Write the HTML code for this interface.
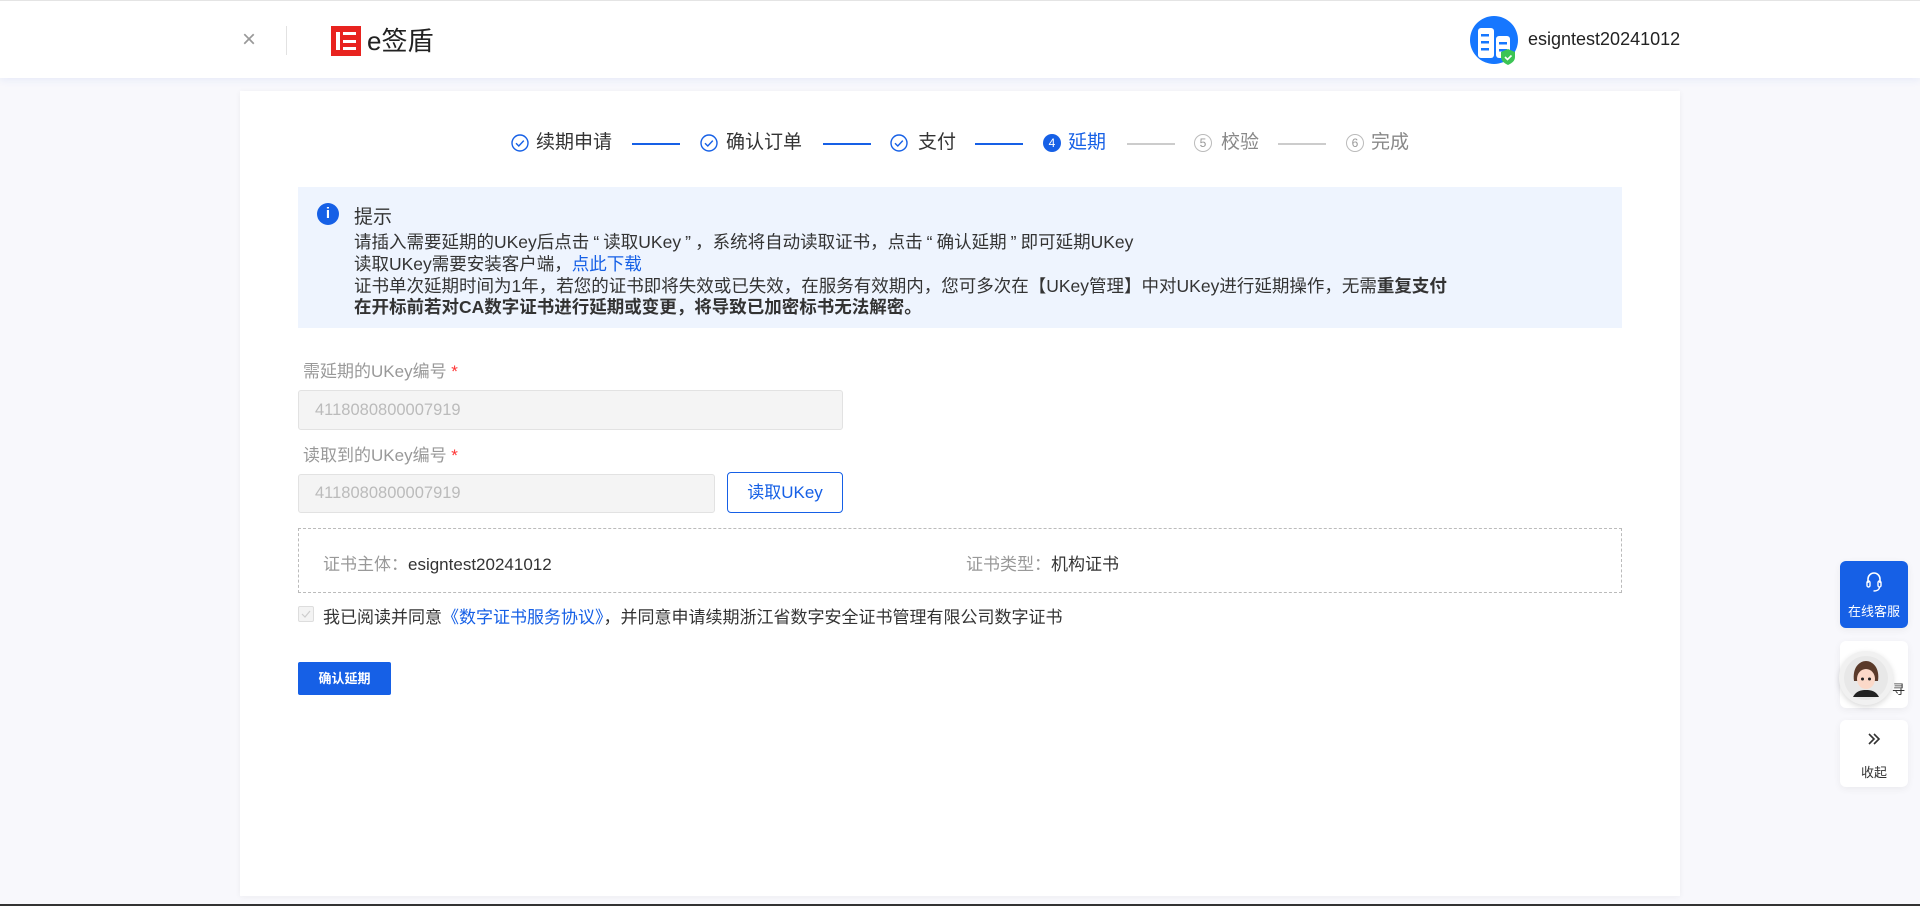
<!DOCTYPE html>
<html><head><meta charset="utf-8">
<style>
*{margin:0;padding:0;box-sizing:border-box}
body{width:1920px;height:906px;overflow:hidden;background:#f8f8fc;font-family:"Liberation Sans","Noto Sans CJK SC",sans-serif;position:relative;color:#333}
.a{position:absolute;white-space:nowrap}
.hdr{position:absolute;left:0;top:0;width:1920px;height:78px;background:#fff;border-top:1px solid #e4e4e4;box-shadow:0 2px 8px rgba(30,80,200,.08)}
.card{position:absolute;left:240px;top:91px;width:1440px;height:805px;background:#fff;box-shadow:0 1px 6px rgba(0,0,0,.05)}
.st{font-size:19px;top:131px;line-height:24px}
.ln{position:absolute;top:143px;height:2px;width:48px}
.ci{position:absolute;top:134px;width:18px;height:18px;border-radius:50%;font-size:12px;text-align:center;line-height:16px}
.alert{position:absolute;left:298px;top:187px;width:1324px;height:141px;background:#eef4fe}
.tx{font-size:17.5px;color:#333;line-height:22px}
.q{display:inline-block;width:14px;text-align:center}
.lbl{font-size:17px;color:#999}
.inp{position:absolute;background:#f4f4f4;border:1px solid #e2e2e2;border-radius:3px;color:#bbb;font-size:16.5px;padding-left:16px}
.fl{position:absolute;left:1840px;width:68px;height:67px;border-radius:6px;background:#fff;box-shadow:0 2px 8px rgba(0,0,0,.06);text-align:center;font-size:13px}
</style></head><body>
<div class="hdr">
 <div class="a" style="left:242px;top:24px;font-size:24px;color:#999;line-height:30px">×</div>
 <div class="a" style="left:286px;top:25px;width:1px;height:29px;background:#e2e2e2"></div>
 <div class="a" style="left:331px;top:25px;width:30px;height:30px;background:#e8231f">
  <div class="a" style="left:5px;top:6px;width:4px;height:18px;background:#fff"></div>
  <div class="a" style="left:12px;top:6px;width:13px;height:3px;background:#fff"></div>
  <div class="a" style="left:12px;top:13.5px;width:13px;height:3px;background:#fff"></div>
  <div class="a" style="left:12px;top:21px;width:13px;height:3px;background:#fff"></div>
 </div>
 <div class="a" style="left:367px;top:24px;font-size:26px;color:#222;line-height:32px">e签盾</div>
 <svg class="a" style="left:1470px;top:15px" width="54" height="50" viewBox="0 0 54 50">
  <circle cx="24" cy="24" r="24" fill="#1677ff"/>
  <rect x="8" y="12" width="16" height="30" rx="3" fill="#fff"/>
  <rect x="26" y="20" width="14" height="22" rx="3" fill="#fff"/>
  <rect x="11" y="18" width="8" height="2.5" fill="#1677ff"/><rect x="11" y="25" width="8" height="2.5" fill="#1677ff"/><rect x="11" y="32" width="8" height="2.5" fill="#1677ff"/>
  <rect x="29" y="26" width="8" height="2.5" fill="#1677ff"/><rect x="29" y="33" width="8" height="2.5" fill="#1677ff"/>
  <path d="M38 33 l7 3 v5 c0 4-3 6-7 8 c-4-2-7-4-7-8 v-5z" fill="#3cc455"/>
  <path d="M35 41 l2.5 2.5 l4-4" stroke="#fff" stroke-width="1.6" fill="none"/>
 </svg>
 <div class="a" style="left:1528px;top:28px;font-size:18px;color:#222">esigntest20241012</div>
</div>
<div class="card"></div>
<svg class="a" style="left:511px;top:134px" width="18" height="18" viewBox="0 0 18 18"><circle cx="9" cy="9" r="8" fill="none" stroke="#1660e6" stroke-width="1.4"/><path d="M5 9.2l2.8 2.8 5-5.4" fill="none" stroke="#1660e6" stroke-width="1.4"/></svg>
<div class="a st" style="left:536px;color:#333">续期申请</div>
<div class="ln" style="left:632px;background:#1660e6"></div>
<svg class="a" style="left:700px;top:134px" width="18" height="18" viewBox="0 0 18 18"><circle cx="9" cy="9" r="8" fill="none" stroke="#1660e6" stroke-width="1.4"/><path d="M5 9.2l2.8 2.8 5-5.4" fill="none" stroke="#1660e6" stroke-width="1.4"/></svg>
<div class="a st" style="left:726px;color:#333">确认订单</div>
<div class="ln" style="left:823px;background:#1660e6"></div>
<svg class="a" style="left:890px;top:134px" width="18" height="18" viewBox="0 0 18 18"><circle cx="9" cy="9" r="8" fill="none" stroke="#1660e6" stroke-width="1.4"/><path d="M5 9.2l2.8 2.8 5-5.4" fill="none" stroke="#1660e6" stroke-width="1.4"/></svg>
<div class="a st" style="left:918px;color:#333">支付</div>
<div class="ln" style="left:975px;background:#1660e6"></div>
<div class="ci" style="left:1043px;background:#1660e6;color:#fff;line-height:18px">4</div>
<div class="a st" style="left:1068px;color:#1660e6">延期</div>
<div class="ln" style="left:1127px;background:#ccc"></div>
<div class="ci" style="left:1194px;border:1px solid #bbb;color:#999">5</div>
<div class="a st" style="left:1221px;color:#888">校验</div>
<div class="ln" style="left:1278px;background:#ccc"></div>
<div class="ci" style="left:1346px;border:1px solid #bbb;color:#999">6</div>
<div class="a st" style="left:1371px;color:#888">完成</div>
<div class="alert"></div>
<div class="a" style="left:317px;top:203px;width:22px;height:22px;border-radius:50%;background:#1660e6;color:#fff;font-size:15px;text-align:center;line-height:22px;font-weight:bold">i</div>
<div class="a" style="left:354px;top:202px;font-size:19px;color:#333">提示</div>
<div class="a tx" style="left:354px;top:231px">请插入需要延期的UKey后点击<span class="q">“</span>读取UKey<span class="q">”</span>，系统将自动读取证书，点击<span class="q">“</span>确认延期<span class="q">”</span>即可延期UKey</div>
<div class="a tx" style="left:354px;top:253px">读取UKey需要安装客户端，<span style="color:#1660e6">点此下载</span></div>
<div class="a tx" style="left:354px;top:275px">证书单次延期时间为1年，若您的证书即将失效或已失效，在服务有效期内，您可多次在【UKey管理】中对UKey进行延期操作，无需<b>重复支付</b></div>
<div class="a tx" style="left:354px;top:296px;font-weight:bold">在开标前若对CA数字证书进行延期或变更，将导致已加密标书无法解密。</div>
<div class="a lbl" style="left:303px;top:357px">需延期的UKey编号 <span style="color:#f33">*</span></div>
<div class="inp" style="left:298px;top:390px;width:545px;height:40px;line-height:38px">4118080800007919</div>
<div class="a lbl" style="left:303px;top:441px">读取到的UKey编号 <span style="color:#f33">*</span></div>
<div class="inp" style="left:298px;top:474px;width:417px;height:39px;line-height:37px">4118080800007919</div>
<div class="a" style="left:727px;top:472px;width:116px;height:41px;border:1px solid #1660e6;border-radius:4px;color:#1660e6;font-size:17px;text-align:center;line-height:39px">读取UKey</div>
<div class="a" style="left:298px;top:528px;width:1324px;height:65px;border:1px dashed #bbb"></div>
<div class="a" style="left:323px;top:550px;font-size:17px;color:#999">证书主体：<span style="color:#333">esigntest20241012</span></div>
<div class="a" style="left:966px;top:550px;font-size:17px;color:#999">证书类型：<span style="color:#333">机构证书</span></div>
<div class="a" style="left:298px;top:606px;width:16px;height:16px;border:1px solid #ddd;border-radius:2px;background:#f3f3f3"></div>
<svg class="a" style="left:301px;top:609px" width="10" height="10"><path d="M1 5l3 3 5-6" fill="none" stroke="#ccc" stroke-width="1.2"/></svg>
<div class="a" style="left:323px;top:603px;font-size:17px;color:#333">我已阅读并同意<span style="color:#1660e6">《数字证书服务协议》</span>，并同意申请续期浙江省数字安全证书管理有限公司数字证书</div>
<div class="a" style="left:298px;top:662px;width:93px;height:33px;background:#1660e6;border-radius:2px;color:#fff;font-size:13px;font-weight:bold;text-align:center;line-height:33px">确认延期</div>
<div class="fl" style="top:561px;background:#1660e6;color:#fff">
 <svg style="position:absolute;left:25px;top:10px" width="18" height="22" viewBox="0 0 18 22"><path d="M3 12V8a6 6 0 0 1 12 0v4" fill="none" stroke="#fff" stroke-width="1.6"/><rect x="2" y="10" width="3" height="6" rx="1.5" fill="none" stroke="#fff" stroke-width="1.4"/><rect x="13" y="10" width="3" height="6" rx="1.5" fill="none" stroke="#fff" stroke-width="1.4"/><path d="M14.5 16c0 3-3 4-6 4" fill="none" stroke="#fff" stroke-width="1.4"/></svg>
 <div style="position:absolute;left:0;top:40px;width:68px">在线客服</div>
</div>
<div class="fl" style="top:641px"><div style="position:absolute;left:52px;top:38px;font-size:13px">寻</div></div>
<div class="a" style="left:1839px;top:651px;width:54px;height:54px;border-radius:50%;background:#f1f1f1;box-shadow:0 2px 6px rgba(0,0,0,.15)">
 <svg width="54" height="54" viewBox="0 0 54 54"><circle cx="27" cy="27" r="22" fill="#e8e8e8"/><path d="M15 30c-2-14 6-20 12-20s14 6 12 20z" fill="#5a3a2a"/><ellipse cx="27" cy="28" rx="9" ry="10" fill="#fbd9c9"/><path d="M14 46c3-6 8-7 13-7s10 1 13 7z" fill="#222"/><circle cx="23.5" cy="28" r="1.5" fill="#222"/><circle cx="30.5" cy="28" r="1.5" fill="#222"/></svg>
</div>
<div class="fl" style="top:720px">
 <svg style="position:absolute;left:27px;top:12px" width="14" height="14" viewBox="0 0 14 14"><path d="M2 2l5 5-5 5M7 2l5 5-5 5" fill="none" stroke="#333" stroke-width="1.6"/></svg>
 <div style="position:absolute;left:0;top:42px;width:68px">收起</div>
</div>
<div class="a" style="left:0;top:904px;width:1920px;height:2px;background:#333"></div>
</body></html>
